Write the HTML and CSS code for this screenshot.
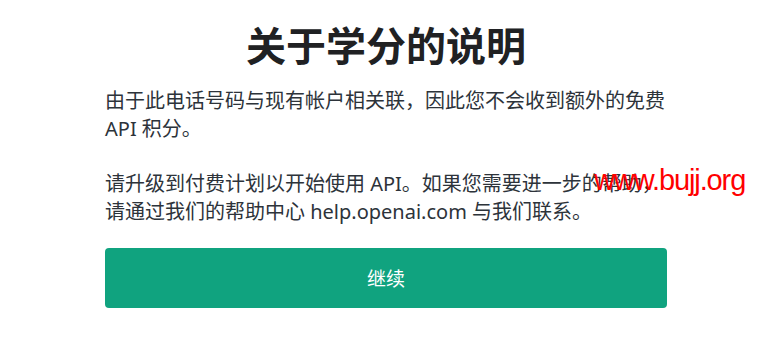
FILE: index.html
```html
<!DOCTYPE html>
<html lang="zh-CN">
<head>
    <meta charset="UTF-8">
    <meta name="viewport" content="width=device-width, initial-scale=1.0">
    <title>关于学分的说明</title>
    <link rel="stylesheet" href="styles.css">
</head>
<body>
    <div class="container">
        <h1>关于学分的说明</h1>
        <p>由于此电话号码与现有帐户相关联，因此您不会收到额外的免费 API 积分。</p>
        <p class="last">请升级到付费计划以开始使用 API。如果您需要进一步的帮助，请通过我们的帮助中心 help.openai.com 与我们联系。</p>
        <button type="button" class="continue-btn">继续</button>
    </div>

    <!-- watermark -->
    <div class="watermark">www.bujj.org</div>
</body>
</html>
```

FILE: styles.css
```css
:root {
    --primary: #10a37f;
    --text: #2d333a;
    --heading: #202123;
}

* {
    box-sizing: border-box;
}

body {
    margin: 0;
    padding: 22px 0 0 6px;
    background: #fff;
    color: var(--text);
    font-family: "Noto Sans", "Noto Sans CJK SC", sans-serif;
}

.container {
    width: 562px;
    margin: 0 auto;
}

h1 {
    margin: 0 0 17px;
    text-align: center;
    font-size: 40px;
    line-height: 48px;
    font-weight: 700;
    color: var(--heading);
}

p {
    margin: 0 0 27px;
    font-size: 20px;
    line-height: 28px;
    width: 560px;
}

p.last {
    margin-bottom: 22px;
}

.continue-btn {
    display: block;
    width: 100%;
    height: 60px;
    margin: 0;
    background: var(--primary);
    color: #fff;
    border: none;
    border-radius: 4px;
    font-family: inherit;
    font-size: 19px;
    cursor: pointer;
}

.watermark {
    position: absolute;
    left: 594px;
    top: 165px;
    color: #ff0000;
    font-family: "Liberation Sans", Arial, sans-serif;
    font-size: 29px;
    line-height: 30px;
    letter-spacing: -1.1px;
}
```
